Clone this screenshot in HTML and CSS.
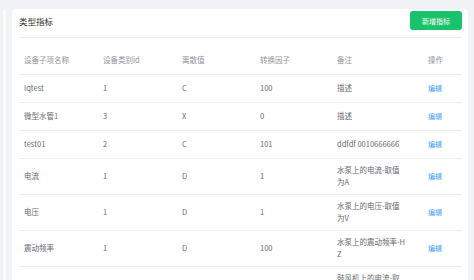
FILE: index.html
```html
<!DOCTYPE html>
<html lang="zh">
<head>
<meta charset="utf-8">
<link rel="stylesheet" href="styles.css">
</head>
<body>
<div class="strip"></div>
<div class="card">
  <div class="card-head">
    <div class="title">类型指标</div>
    <button class="btn-add">新增指标</button>
  </div>
  <table class="grid">
    <colgroup>
      <col class="c1"><col class="c2"><col class="c3"><col class="c4"><col class="c5"><col class="c6">
    </colgroup>
    <thead>
      <tr><th>设备子项名称</th><th>设备类别id</th><th>离散值</th><th>转换因子</th><th>备注</th><th>操作</th></tr>
    </thead>
    <tbody>
      <tr><td>lqtest</td><td>1</td><td>C</td><td>100</td><td class="note">描述</td><td><a class="edit">编辑</a></td></tr>
      <tr><td>微型水管1</td><td>3</td><td>X</td><td>0</td><td class="note">描述</td><td><a class="edit">编辑</a></td></tr>
      <tr><td>test01</td><td>2</td><td>C</td><td>101</td><td class="note">ddfdf 0010666666</td><td><a class="edit">编辑</a></td></tr>
      <tr><td>电流</td><td>1</td><td>D</td><td>1</td><td class="note">水泵上的电流-取值为A</td><td><a class="edit">编辑</a></td></tr>
      <tr><td>电压</td><td>1</td><td>D</td><td>1</td><td class="note">水泵上的电压-取值为V</td><td><a class="edit">编辑</a></td></tr>
      <tr><td>震动频率</td><td>1</td><td>D</td><td>100</td><td class="note">水泵上的震动频率-HZ</td><td><a class="edit">编辑</a></td></tr>
      <tr><td>鼓风机电流</td><td>1</td><td>D</td><td>1</td><td class="note">鼓风机上的电流-取值为A</td><td><a class="edit">编辑</a></td></tr>
    </tbody>
  </table>
</div>
</body>
</html>
```

FILE: styles.css
```css
html, body {
  margin: 0;
  padding: 0;
  height: 100%;
  overflow: hidden;
}
body {
  background: #f0f2f5;
  display: flex;
  align-items: flex-start;
  font-family: "Noto Sans CJK SC", "Noto Sans", sans-serif;
}
.strip {
  width: 3px;
  height: 300px;
  margin: 10px 6px 0 3px;
  background: #fafbfc;
}
.card {
  flex: 1;
  margin: 9px 6px 0 0;
  background: #fff;
  border-radius: 4px;
  padding: 0 6px 0 7px;
  min-height: 300px;
}
.card-head {
  display: flex;
  justify-content: space-between;
  align-items: center;
  padding: 2px 0 7px;
  border-bottom: 1px solid #ebeef5;
}
.title {
  font-size: 8.5px;
  color: #303133;
}
.btn-add {
  width: 52px;
  height: 19px;
  border: 0;
  border-radius: 3px;
  background: #19c26b;
  color: #fff;
  font-family: inherit;
  font-size: 7px;
  padding: 0;
}
.grid {
  width: 100%;
  margin-top: 8px;
  border-collapse: collapse;
  table-layout: fixed;
}
.c1 { width: 79px; }
.c2 { width: 79px; }
.c3 { width: 78px; }
.c4 { width: 77px; }
.c5 { width: 91px; }
.c6 { width: 39px; }
.grid tr {
  height: 28px;
}
.grid th, .grid td {
  text-align: left;
  font-weight: normal;
  font-size: 7.5px;
  line-height: 12.5px;
  padding: 5px 5px;
  border-bottom: 1px solid #ebeef5;
  vertical-align: middle;
  word-break: break-all;
}
.grid th {
  color: #909399;
}
.grid td {
  color: #666a70;
}
.grid td.note {
  padding-right: 16px;
}
.edit {
  color: #409eff;
  font-size: 7px;
}
```
